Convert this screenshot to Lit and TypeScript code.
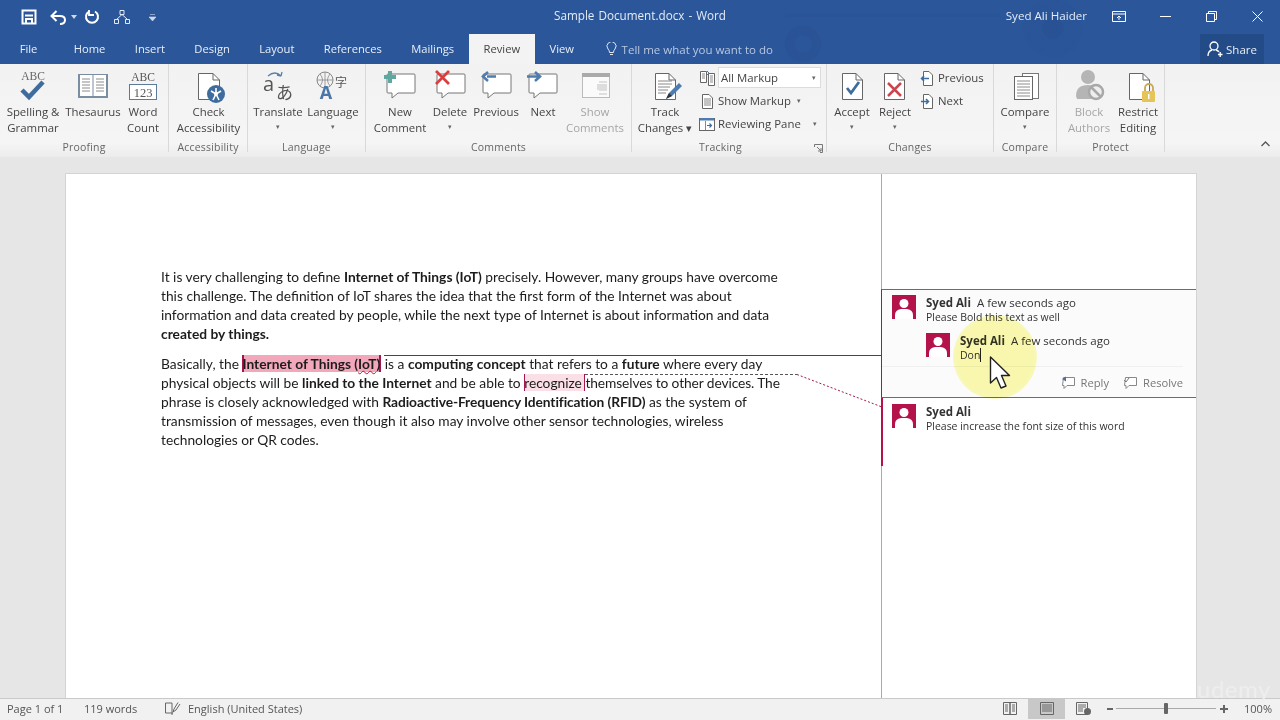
import { LitElement, html, css, svg, nothing } from 'lit';
import { customElement } from 'lit/decorators.js';

const balloon = (x: number) => svg`<path d="M${x + 1} 6H${x + 27}a1 1 0 0 1 1 1V24a1 1 0 0 1-1 1H${x + 11}L${x + 5} 30V25H${x + 1}a1 1 0 0 1-1-1V7a1 1 0 0 1 1-1Z" fill="#fff" stroke="#777" stroke-width="1"/>`;
const sheet = (x: number, w = 21) => svg`<path d="M${x + .5} 5.5H${x + w - 7}L${x + w - .5} 12V31.5H${x + .5}Z" fill="#fff" stroke="#666"/><path d="M${x + w - 7} 5.5V12H${x + w - .5}" fill="none" stroke="#666"/>`;

// ribbon icons, 40x36 box centred over the button label
const icons: Record<string, unknown> = {
  spelling: svg`<text x="20" y="12" text-anchor="middle" class="ic-serif" font-size="11.5" fill="#666">ABC</text>
    <path d="M9 22l7 7L30 14" fill="none" stroke="#3f6c9e" stroke-width="4.5"/>`,
  thesaurus: svg`<path d="M5 6H35V30H5Z" fill="#7b8da1"/><path d="M7 7H19.5V28H7ZM20.5 7H33V28H20.5Z" fill="#fff"/>
    <path d="M9 11h8M9 14h8M9 17h8M9 20h8M9 23h8M23 11h8M23 14h8M23 17h8M23 20h8M23 23h8" stroke="#8c8c8c"/>`,
  count: svg`<text x="20" y="13" text-anchor="middle" class="ic-serif" font-size="11.5" fill="#555">ABC</text>
    <rect x="6.5" y="16.5" width="27" height="15" fill="#fff" stroke="#5c7a99"/>
    <text x="20" y="29" text-anchor="middle" class="ic-serif" font-size="12.5" fill="#555">123</text>`,
  access: svg`${sheet(9, 22)}<circle cx="27" cy="26" r="9" fill="#3f6c9e"/>
    <path d="M27 26v-6M27 26l5-3M27 26l-5-3M27 26l3 6M27 26l-3 6" stroke="#fff" stroke-width="1.6"/><circle cx="27" cy="26" r="2" fill="#fff"/>`,
  translate: svg`<text x="5" y="23" class="ic-sans" font-size="20" fill="#555">a</text>
    <text x="18" y="31" class="ic-cjk" font-size="17" fill="#555">あ</text>
    <path d="M10 8q7-6 13 0M23 8l1-4M23 8l-4-1" fill="none" stroke="#5b7fa6" stroke-width="1.3"/>`,
  language: svg`<circle cx="12" cy="12" r="8" fill="none" stroke="#888"/><path d="M4 12h16M12 4v16M7 6q5 6 0 12M17 6q-5 6 0 12" fill="none" stroke="#888" stroke-width=".8"/>
    <text x="13" y="30.5" text-anchor="middle" class="ic-sans-b" font-size="18" fill="#4a76a8">A</text>
    <text x="22" y="19" class="ic-cjk" font-size="12" fill="#555">字</text>`,
  newc: svg`${balloon(7)}<path d="M8 3h4v4h4v4h-4v4H8v-4H4V7h4Z" fill="#5fa8a0"/>`,
  delc: svg`${balloon(7)}<path d="M6 3l13 13M19 3L6 16" stroke="#d64040" stroke-width="2.8"/>`,
  prev: svg`${balloon(7)}<path d="M20 8.5H11M12 4L7 8.5l5 4.5" fill="none" stroke="#4f7cae" stroke-width="2.6"/>`,
  next: svg`${balloon(6)}<path d="M4 8.5h12M12 4l5 4.5-5 4.5" fill="none" stroke="#4f7cae" stroke-width="2.6"/>`,
  show: svg`<rect x="7.5" y="5.5" width="27" height="24" fill="#fafafa" stroke="#bbb"/><rect x="7" y="5" width="28" height="4" fill="#aaa"/>
    <path d="M24 14h8M24 18h8M24 22h8M24 26h8" stroke="#c4c4c4"/><rect x="22" y="16" width="10" height="6" fill="#ddd"/>`,
  track: svg`${sheet(10)}<path d="M13 13h14M13 16h14M13 19h12M13 22h10M13 25h8" stroke="#888"/>
    <path d="M21 31l3-6 10-10 3 3-10 10Z" fill="#4f7cae"/><path d="M21 31l3-6 3 3Z" fill="#333"/>`,
  accept: svg`${sheet(10)}<path d="M15 20l4 5 8-11" fill="none" stroke="#3f6c9e" stroke-width="2.8"/>`,
  reject: svg`${sheet(9)}<path d="M13 15l13 13M26 15L13 28" stroke="#c9474f" stroke-width="2.5"/>`,
  compare: svg`<rect x="17.5" y="5.5" width="16" height="25" fill="#fff" stroke="#777"/>
    <rect x="9.5" y="8.5" width="18" height="23" fill="#fff" stroke="#666"/>
    <path d="M12 13h13M12 16h13M12 19h13M12 22h13M12 25h13M12 28h13" stroke="#8c8c8c"/>`,
  block: svg`<circle cx="19" cy="9" r="7" fill="#b5b5b5"/><path d="M7 28q0-11 12-11t11 7l-4 7H8Z" fill="#b5b5b5"/>
    <circle cx="27" cy="24" r="7" fill="#eee" stroke="#a8a8a8" stroke-width="2.5"/><path d="M22 19l10 10" stroke="#a8a8a8" stroke-width="2.5"/>`,
  restrict: svg`${sheet(11)}<path d="M27 23v-3a4 4 0 0 1 8 0v3" fill="none" stroke="#c9a94f" stroke-width="1.8"/>
    <rect x="24" y="23" width="13" height="11" rx="1" fill="#e6c558"/><rect x="30" y="26" width="1.5" height="5" fill="#fff"/>`,
  // 16x16 ones
  display: svg`<path d="M1.5 1.5h6v11h-6ZM9.5 3.5h6v12h-6Z" fill="#fff" stroke="#666"/><path d="M3 4h3M3 6h3M3 8h3M11 6h3M11 8h3M11 10h3M11 12h3" stroke="#888"/><path d="M8 1l2 2-2 2" fill="none" stroke="#4f7cae"/>`,
  markup: svg`<path d="M3.5 1.5H10L13.5 5V15.5H3.5Z" fill="#fff" stroke="#666"/><path d="M5 6h7M5 8h7M5 10h7M5 12h7" stroke="#888"/>`,
  pane: svg`<rect x=".5" y="2.5" width="15" height="12" fill="#fff" stroke="#666"/><rect x="1" y="2" width="14" height="2.5" fill="#4f7cae"/><path d="M6.5 5v9" stroke="#888"/><path d="M8 9.5h4M10.5 7.5l2 2-2 2" fill="none" stroke="#3f6c9e" stroke-width="1.2"/>`,
  smprev: svg`<path d="M4.5 1.5H10L13.5 5V15.5H4.5Z" fill="#fff" stroke="#666"/><path d="M10 8.5H2.5M5 6L2.5 8.5 5 11" fill="none" stroke="#3f6c9e" stroke-width="1.5"/>`,
  smnext: svg`<path d="M4.5 1.5H10L13.5 5V15.5H4.5Z" fill="#fff" stroke="#666"/><path d="M2 8.5h7.5M7 6l2.5 2.5L7 11" fill="none" stroke="#3f6c9e" stroke-width="1.5"/>`,
};

type Btn = { icon: string; lines: string[]; w: number; menu?: boolean; off?: boolean };
type Small = { icon: string; label: string; menu?: boolean };
type SmallCol = { small: Small[]; w: number; ml: number; select?: boolean };
type Group = { label: string; w: number; pad: number; launcher?: boolean; items: (Btn | SmallCol)[] };

const groups: Group[] = [
  { label: 'Proofing', w: 169, pad: 0, items: [
    { icon: 'spelling', lines: ['Spelling &', 'Grammar'], w: 66 },
    { icon: 'thesaurus', lines: ['Thesaurus'], w: 54 },
    { icon: 'count', lines: ['Word', 'Count'], w: 46 },
  ] },
  { label: 'Accessibility', w: 79, pad: 0, items: [
    { icon: 'access', lines: ['Check', 'Accessibility'], w: 79 },
  ] },
  { label: 'Language', w: 118, pad: 2, items: [
    { icon: 'translate', lines: ['Translate'], w: 56, menu: true },
    { icon: 'language', lines: ['Language'], w: 54, menu: true },
  ] },
  { label: 'Comments', w: 266, pad: 6, items: [
    { icon: 'newc', lines: ['New', 'Comment'], w: 56 },
    { icon: 'delc', lines: ['Delete'], w: 44, menu: true },
    { icon: 'prev', lines: ['Previous'], w: 48 },
    { icon: 'next', lines: ['Next'], w: 46 },
    { icon: 'show', lines: ['Show', 'Comments'], w: 58, off: true },
  ] },
  { label: 'Tracking', w: 195, pad: 3, launcher: true, items: [
    { icon: 'track', lines: ['Track', 'Changes ▾'], w: 60 },
    { w: 124, ml: 4, select: true, small: [
      { icon: 'display', label: 'All Markup' },
      { icon: 'markup', label: 'Show Markup', menu: true },
      { icon: 'pane', label: 'Reviewing Pane  ', menu: true },
    ] },
  ] },
  { label: 'Changes', w: 167, pad: 5, items: [
    { icon: 'accept', lines: ['Accept'], w: 40, menu: true },
    { icon: 'reject', lines: ['Reject'], w: 46, menu: true },
    { w: 70, ml: 1, small: [
      { icon: 'smprev', label: 'Previous' },
      { icon: 'smnext', label: 'Next' },
    ] },
  ] },
  { label: 'Compare', w: 63, pad: 0, items: [
    { icon: 'compare', lines: ['Compare'], w: 62, menu: true },
  ] },
  { label: 'Protect', w: 108, pad: 6, items: [
    { icon: 'block', lines: ['Block', 'Authors'], w: 52, off: true },
    { icon: 'restrict', lines: ['Restrict', 'Editing'], w: 46 },
  ] },
];

const tabs = ['File', 'Home', 'Insert', 'Design', 'Layout', 'References', 'Mailings', 'Review', 'View'];

const avatar = html`<svg class="avatar" viewBox="0 0 24 24"><rect width="24" height="24" fill="#b3124b"/><circle cx="12" cy="8.5" r="4.5" fill="#fff"/><path d="M3 24v-4q0-5 6-6h6q6 1 6 6v4Z" fill="#fff"/></svg>`;

@customElement('app-root')
export class AppRoot extends LitElement {
  static styles = css`
    :host {
      display: flex;
      flex-direction: column;
      position: relative;
      width: 1280px;
      height: 720px;
      overflow: hidden;
      font-family: "Open Sans", "Liberation Sans", sans-serif;
      background: #e6e6e6;
      color: #444;
    }
    .ic-serif { font-family: "Liberation Serif", serif; }
    .ic-sans { font-family: "Open Sans", sans-serif; }
    .ic-sans-b { font-family: "Open Sans", sans-serif; font-weight: 700; }
    .ic-cjk { font-family: "Noto Sans CJK JP", sans-serif; }

    /* title bar, the gradients stand in for the faint Office background art */
    .chrome {
      flex: none;
      color: #fff;
      background:
        radial-gradient(circle at 1053px 28px, rgba(35,70,135,.3) 0 10px, rgba(35,70,135,.15) 11px 28px, transparent 31px),
        radial-gradient(circle at 803px 44px, transparent 0 8px, rgba(35,70,135,.22) 9px 18px, transparent 19px),
        linear-gradient(rgba(35,70,135,.15), rgba(35,70,135,.15)) 785px 13px / 215px 4px no-repeat,
        #2b579a;
    }
    .titlebar { display: grid; grid-template-columns: 1fr auto 1fr; height: 34px; align-items: center; }
    .qat { display: flex; align-items: center; padding-left: 21px; }
    .qat svg { display: block; }
    .doc-title { font-size: 11.7px; color: #e4ebf6; word-spacing: 1px; padding-bottom: 4px; }
    .win { display: flex; align-items: center; justify-content: flex-end; }
    .user { font-size: 11.6px; color: #e4ebf6; margin-right: 9px; padding-bottom: 4px; }
    .win-btn { width: 46px; display: flex; justify-content: center; padding-bottom: 2px; }
    .win-btn svg { display: block; }

    /* tabs */
    .tabs { display: flex; height: 30px; align-items: stretch; padding-left: 5px; }
    .tab { padding: 0 14.7px; font-size: 11.2px; line-height: 30px; color: #e8eef7; }
    .tab:first-child { margin-right: 7px; }
    .tab.sel { background: #f3f3f3; color: #444; }
    .tell { display: flex; align-items: center; gap: 5px; margin-left: 17px; font-size: 11.5px; color: #b7c7e0; }
    .share { margin-left: auto; margin-right: 16px; width: 64px; background: #234b87; display: flex; align-items: center; justify-content: center; gap: 3px; font-size: 11.5px; color: #e8eef7; }

    /* ribbon */
    .ribbon { display: flex; height: 93px; flex: none; background: linear-gradient(#f2f2f2, #f5f5f5 85%, #ececec); }
    .group { box-sizing: border-box; display: flex; flex-direction: column; height: 88px; border-right: 1px solid #d9d9d9; position: relative; }
    .group-items { display: flex; flex: 1; min-height: 0; }
    .group-label { height: 15px; line-height: 20px; text-align: center; font-size: 10.5px; color: #666; letter-spacing: .2px; }
    .launcher { position: absolute; right: 3px; bottom: -1px; }
    .btn { display: flex; flex-direction: column; align-items: center; flex: none; padding-top: 4px; box-sizing: border-box; }
    .btn svg { display: block; flex: none; }
    .btn-label { font-size: 11.4px; line-height: 16px; color: #444; text-align: center; white-space: nowrap; }
    .btn.off .btn-label { color: #a6a6a6; }
    .caret { font-size: 7px; line-height: 14px; color: #666; }
    .small-col { display: flex; flex-direction: column; flex: none; padding-top: 3px; gap: 2px; }
    .small { display: flex; align-items: center; gap: 3px; height: 21px; font-size: 11.4px; white-space: pre; }
    .small svg { flex: none; display: block; }
    .small .caret { margin-left: 3px; }
    .select { background: #fff; width: 103px; height: 21px; box-sizing: border-box; border: 1px solid #dcdcdc; display: flex; align-items: center; justify-content: space-between; padding: 0 4px 0 2px; }
    .collapse { flex: 1; display: flex; align-items: flex-end; justify-content: flex-end; padding: 0 10px 5px 0; height: 88px; box-sizing: border-box; }

    /* document */
    .work { flex: 1; min-height: 0; padding: 17px 0 0 66px; }
    .page { width: 1130px; height: 100%; background: #fff; display: flex; box-shadow: 0 0 0 1px #d4d4d4; }
    .sheet { width: 815px; flex: none; box-sizing: border-box; padding: 93px 0 0 95px; font-family: Lato, "Liberation Sans", sans-serif; font-size: 13.77px; line-height: 19px; color: #1c1c1c; white-space: nowrap; }
    .sheet p { margin: 0 0 11px; }
    .sheet b { font-weight: 700; }
    .hl { background: #f2a7ba; box-shadow: inset 2px 0 #a3174e, inset -2px 0 #a3174e; padding-right: 1px; }
    .hl2 { background: #fbdfe7; box-shadow: inset 1px 0 #a3174e, inset -1px 0 #a3174e; }
    .squig { text-decoration: underline wavy #c8102e 1px; }
    .tight { letter-spacing: -.1px; }

    /* comments */
    .pane { flex: 1; border-left: 1px solid #a9a9a9; padding-top: 115px; font-size: 10.47px; color: #333; }
    .cmt { box-sizing: border-box; position: relative; }
    .cmt.open { height: 109px; border-top: 1px solid #d03a6a; border-bottom: 1px solid #d03a6a; border-left: 1px solid #9e1a50; background: #fbfbfb; padding: 5px 0 0 10px; margin-left: -1px; }
    .cmt.idle { height: 68px; border-left: 2px solid #b3124b; padding: 6px 0 0 9px; margin-left: -1px; }
    .entry { display: flex; gap: 10px; }
    .entry.reply { margin: 9px 0 0 34px; }
    .avatar { width: 24px; height: 24px; flex: none; display: block; }
    .who { font-size: 11.5px; line-height: 16px; color: #333; white-space: nowrap; }
    .who b { font-weight: 700; margin-right: 6px; }
    .said { line-height: 13px; white-space: nowrap; }
    .caret-bar { border-right: 1px solid #222; }
    .actions { position: absolute; left: 0; right: 13px; bottom: 0; height: 30px; border-top: 1px solid #f0f0f0; display: flex; justify-content: flex-end; align-items: center; gap: 14px; font-size: 11.2px; color: #777; }
    .action { display: flex; align-items: center; gap: 5px; }

    /* status bar */
    .status { flex: none; height: 22px; padding-bottom: 2px; background: #f1f1f1; border-top: 1px solid #c9c9c9; box-sizing: border-box; display: flex; align-items: center; font-size: 11px; color: #555; }
    .status span { white-space: nowrap; }
    .s-page { margin-left: 7px; width: 77px; }
    .s-words { width: 72px; }
    .s-proof { width: 32px; display: block; }
    .s-right { margin-left: auto; display: flex; align-items: center; height: 21px; }
    .view-btn { width: 37px; height: 100%; display: flex; align-items: center; justify-content: center; }
    .view-btn.sel { background: #c8c8c8; }
    .zoom-icon { display: block; flex: none; }
    .zoom-minus { margin-left: 4px; }
    .slider { position: relative; width: 100px; height: 1px; background: #aaa; margin: 0 4px 0 2px; }
    .thumb { position: absolute; left: 48px; top: -5px; width: 4px; height: 11px; background: #666; border-radius: 1px; }
    .pct { margin: 0 8px 0 16px; }

    /* things floating on top of the page */
    .links { position: absolute; left: 0; top: 0; pointer-events: none; }
    .spot { position: absolute; left: 953px; top: 315px; width: 84px; height: 84px; border-radius: 50%; background: radial-gradient(circle, #fcfbb0 62%, #fdfdd4 88%, #fff 100%); mix-blend-mode: multiply; pointer-events: none; }
    .mouse { position: absolute; left: 989px; top: 356px; pointer-events: none; }
    .mark { position: absolute; left: 1197px; top: 678px; font-family: Lato, sans-serif; font-size: 24px; line-height: 22px; color: #eee; letter-spacing: .5px; }
  `;

  private icon(name: string, w = 40, h = 36) {
    return html`<svg width=${w} height=${h} viewBox="0 0 ${w} ${h}">${icons[name]}</svg>`;
  }

  private renderSmall(item: SmallCol) {
    return html`<div class="small-col" style="width:${item.w}px;margin-left:${item.ml}px">
      ${item.small.map((s, i) => html`<div class="small">
        ${this.icon(s.icon, 16, 16)}
        ${item.select && i === 0
          ? html`<div class="select"><span>${s.label}</span><span class="caret">▾</span></div>`
          : html`<span>${s.label}</span>`}
        ${s.menu ? html`<span class="caret">▾</span>` : nothing}
      </div>`)}
    </div>`;
  }

  private renderGroup(g: Group) {
    return html`<div class="group" style="width:${g.w}px;padding-left:${g.pad}px">
      <div class="group-items">
        ${g.items.map((it) => 'small' in it ? this.renderSmall(it) : html`
          <div class="btn ${it.off ? 'off' : ''}" style="width:${it.w}px">
            ${this.icon(it.icon)}
            ${it.lines.map((l) => html`<div class="btn-label">${l}</div>`)}
            ${it.menu ? html`<div class="caret">▾</div>` : nothing}
          </div>`)}
      </div>
      <div class="group-label" style="margin-left:${-g.pad}px;padding-right:${g.launcher ? 17 : 0}px">${g.label}</div>
      ${g.launcher ? html`<svg class="launcher" width="9" height="9" viewBox="0 0 9 9"><path d="M.5 3V.5H8.5V8.5H6M3 3l4 4M7 4v3H4" fill="none" stroke="#777"/></svg>` : nothing}
    </div>`;
  }

  render() {
    return html`
      <div class="chrome">
        <div class="titlebar">
          <div class="qat">
            <svg width="16" height="16" viewBox="0 0 16 16"><path d="M1.5 1.5H14.5V14.5H1.5Z" fill="none" stroke="#fff" stroke-width="2"/><path d="M4 6.5H12M5 14V10H11V14" fill="none" stroke="#fff" stroke-width="2"/></svg>
            <svg style="margin-left:13px" width="17" height="16" viewBox="0 0 17 16"><path d="M2 7h8q5 0 5 4t-5 4" fill="none" stroke="#fff" stroke-width="2"/><path d="M6.5 2L1.5 7l5 5" fill="none" stroke="#fff" stroke-width="2"/></svg>
            <svg style="margin-left:4px" width="7" height="5" viewBox="0 0 7 5"><path d="M0 0h6L3 4Z" fill="#cdd9ec"/></svg>
            <svg style="margin-left:6px" width="16" height="16" viewBox="0 0 16 16"><path d="M11 2.5a6 6 0 1 1-6 0" fill="none" stroke="#fff" stroke-width="2"/><path d="M5 1v5H10" fill="none" stroke="#fff" stroke-width="1.8"/></svg>
            <svg style="margin-left:13px" width="18" height="16" viewBox="0 0 18 16"><path d="M7 1.5h4v4H7ZM1.5 10.5h4v4h-4ZM12.5 10.5h4v4h-4Z" fill="none" stroke="#e4ebf6"/><path d="M9 5.5L3.5 10.5M9 5.5l5.5 5" stroke="#e4ebf6"/></svg>
            <svg style="margin-left:18px" width="7" height="9" viewBox="0 0 7 9"><path d="M1 1.5h5M0 4h7L3.5 8Z" fill="#cdd9ec" stroke="#cdd9ec" stroke-width=".6"/></svg>
          </div>
          <div class="doc-title">Sample Document.docx - Word</div>
          <div class="win">
            <span class="user">Syed Ali Haider</span>
            <div class="win-btn"><svg width="14" height="11" viewBox="0 0 14 11"><path d="M.5.5h13v10H.5ZM.5 3h13M7 9V5M5 7l2-2 2 2" fill="none" stroke="#fff"/></svg></div>
            <div class="win-btn"><svg width="11" height="11" viewBox="0 0 11 11"><path d="M0 5.5h11" stroke="#fff"/></svg></div>
            <div class="win-btn"><svg width="11" height="11" viewBox="0 0 11 11"><path d="M.5 2.5h8v8h-8ZM2.5 2.5v-2h8v8h-2" fill="none" stroke="#fff"/></svg></div>
            <div class="win-btn"><svg width="11" height="11" viewBox="0 0 11 11"><path d="M.5.5l10 10M10.5.5l-10 10" stroke="#fff"/></svg></div>
          </div>
        </div>
        <div class="tabs">
          ${tabs.map((t) => html`<div class="tab ${t === 'Review' ? 'sel' : ''}">${t}</div>`)}
          <div class="tell">
            <svg width="11" height="15" viewBox="0 0 11 15"><path d="M3.5 10.5q0-2-1.5-3.5a4.5 4.5 0 1 1 7 0q-1.5 1.5-1.5 3.5ZM4 12.5h3" fill="none" stroke="#dfe7f3"/></svg>
            <span>Tell me what you want to do</span>
          </div>
          <div class="share">
            <svg width="16" height="16" viewBox="0 0 16 16"><circle cx="7" cy="5" r="4" fill="none" stroke="#fff" stroke-width="1.3"/><path d="M1 15q0-5 4-6M9 9q2 .5 3 2M11 13.5h4.5M13.2 11v5" fill="none" stroke="#fff" stroke-width="1.3"/></svg>
            <span>Share</span>
          </div>
        </div>
      </div>

      <div class="ribbon">
        ${groups.map((g) => this.renderGroup(g))}
        <div class="collapse"><svg width="9" height="6" viewBox="0 0 9 6"><path d="M.5 5L4.5 1l4 4" fill="none" stroke="#555" stroke-width="1.3"/></svg></div>
      </div>

      <div class="work">
        <div class="page">
          <div class="sheet">
            <p>It is very challenging to define <b>Internet of Things (IoT)</b> precisely. However, many groups have overcome<br>
            this challenge. The definition of IoT shares the idea that the first form of the Internet was about<br>
            information and data created by people, while the next type of Internet is about information and data<br>
            <b>created by things.</b></p>
            <p>Basically, the <span class="hl"><b>Internet of Things (<span class="squig">IoT</span>)</b></span> is a <b>computing concept</b> that refers to a <b>future</b> where every day<br>
            physical objects will be <b>linked to the Internet</b> and be able to <span class="hl2">recognize </span><span class="tight">themselves to other devices. The</span><br>
            phrase is closely acknowledged with <b class="tight">Radioactive-Frequency Identification (RFID)</b> as the system of<br>
            transmission of messages, even though it also may involve other sensor technologies, wireless<br>
            technologies or QR codes.</p>
          </div>
          <div class="pane">
            <div class="cmt open">
              <div class="entry">
                ${avatar}
                <div>
                  <div class="who"><b>Syed Ali</b>A few seconds ago</div>
                  <div class="said">Please Bold this text as well</div>
                </div>
              </div>
              <div class="entry reply">
                ${avatar}
                <div>
                  <div class="who"><b>Syed Ali</b>A few seconds ago</div>
                  <div class="said"><span class="caret-bar">Don</span></div>
                </div>
              </div>
              <div class="actions">
                <div class="action">
                  <svg width="15" height="13" viewBox="0 0 15 13"><path d="M2.5 1.5h11v8H6l-3 3v-3H1.5Z" fill="#fff" stroke="#888"/><path d="M5 .5L1 3l4 2.5Z" fill="#5c6a9a"/></svg>
                  <span>Reply</span>
                </div>
                <div class="action">
                  <svg width="15" height="13" viewBox="0 0 15 13"><path d="M2.5 1.5h11v8H6l-3 3v-3H1.5Z" fill="#fff" stroke="#888"/><path d="M1 4l2 2 3-4" fill="none" stroke="#777"/></svg>
                  <span>Resolve</span>
                </div>
              </div>
            </div>
            <div class="cmt idle">
              <div class="entry">
                ${avatar}
                <div>
                  <div class="who"><b>Syed Ali</b></div>
                  <div class="said">Please increase the font size of this word</div>
                </div>
              </div>
            </div>
          </div>
        </div>
      </div>

      <div class="status">
        <span class="s-page">Page 1 of 1</span>
        <span class="s-words">119 words</span>
        <svg class="s-proof" width="16" height="15" viewBox="0 0 16 15"><path d="M8 2H1.5V12H8V14M8 2v10M8 12h1" fill="none" stroke="#666"/><path d="M14 1.5L10 8l-1 3 3-2 4-6" fill="none" stroke="#666"/></svg>
        <span>English (United States)</span>
        <div class="s-right">
          <div class="view-btn"><svg width="14" height="13" viewBox="0 0 14 13"><path d="M.5.5H7V12.5H.5ZM7 .5h6.500V12.5H7ZM2 3h3M2 5h3M2 7h3M2 9h3M9 3h3M9 5h3M9 7h3M9 9h3" fill="none" stroke="#666"/></svg></div>
          <div class="view-btn sel"><svg width="14" height="13" viewBox="0 0 14 13"><path d="M.5.5h13v12H.5ZM2 3h10M2 5h10M2 7h10M2 9h10" fill="none" stroke="#666"/></svg></div>
          <div class="view-btn"><svg width="15" height="13" viewBox="0 0 15 13"><path d="M.5.5h11v12H.5ZM2 3h8M2 5h8M2 7h5M2 9h5" fill="none" stroke="#666"/><circle cx="11.5" cy="9.5" r="3.5" fill="#666"/></svg></div>
          <svg class="zoom-icon zoom-minus" width="8" height="8" viewBox="0 0 8 8"><path d="M1 4h6" stroke="#666" stroke-width="2"/></svg>
          <div class="slider"><div class="thumb"></div></div>
          <svg class="zoom-icon" width="8" height="8" viewBox="0 0 8 8"><path d="M0 4h8M4 0v8" stroke="#666" stroke-width="2"/></svg>
          <span class="pct">100%</span>
        </div>
      </div>

      <svg class="links" width="1280" height="720">
        <path d="M384 355.5H881" stroke="#a3174e" fill="none"/>
        <path d="M585 374.5H797" stroke="#555" stroke-dasharray="3 2" fill="none"/>
        <path d="M797 374.5L882 407" stroke="#a3174e" stroke-dasharray="2 2" fill="none"/>
      </svg>
      <div class="spot"></div>
      <svg class="mouse" width="24" height="34" viewBox="0 0 24 34"><path d="M1.5 1V27L7.5 21.5 12 32 17 30 12.5 19.5H20.5Z" fill="#fff" stroke="#222" stroke-width="1.4" stroke-linejoin="round"/></svg>
      <div class="mark">udemy</div>
    `;
  }
}
